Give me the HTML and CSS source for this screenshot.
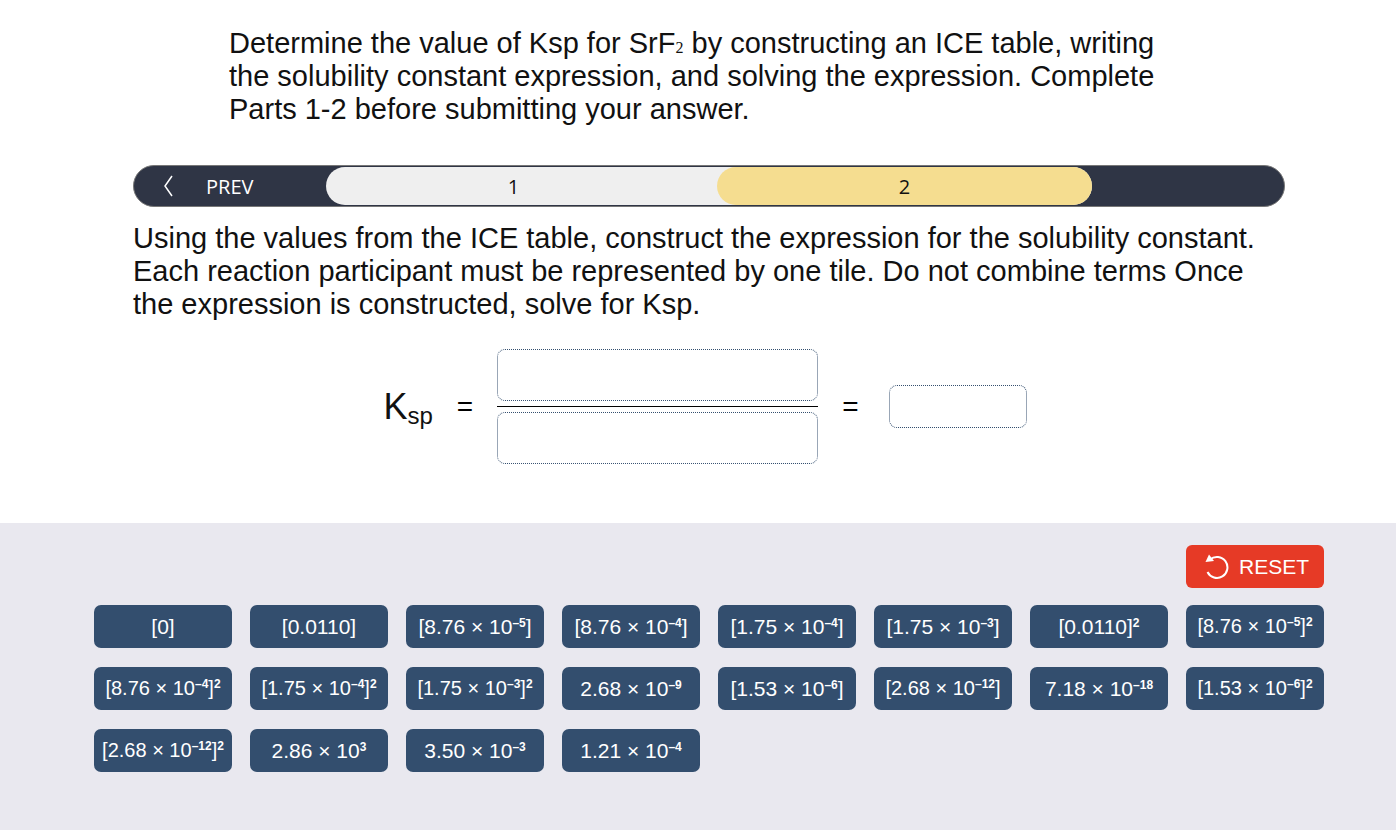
FILE: index.html
```
<!DOCTYPE html>
<html lang="en">
<head>
  <meta charset="UTF-8" />
  <meta name="viewport" content="width=device-width, initial-scale=1.0"/>
  <title>Ksp Expression</title>
  <link rel="stylesheet" href="styles.css">
</head>
<body>
  <main>
    <p class="question">Determine the value of Ksp for SrF<span class="formula-sub">2</span> by constructing an ICE table, writing the solubility constant expression, and solving the expression. Complete Parts 1-2 before submitting your answer.</p>

    <nav class="stepper">
      <button class="prev">
        <svg width="12" height="22" viewBox="0 0 12 22" fill="none" stroke="#fff" stroke-width="1.5"><path d="M10 1 L3 11 L10 21"/></svg>
        <span>PREV</span>
      </button>
      <div class="steps">
        <button class="step">1</button>
        <button class="step active">2</button>
      </div>
    </nav>

    <p class="instructions">Using the values from the ICE table, construct the expression for the solubility constant. Each reaction participant must be represented by one tile. Do not combine terms Once the expression is constructed, solve for Ksp.</p>

    <div class="equation">
      <span class="ksp">K<sub>sp</sub></span>
      <span class="equals">=</span>
      <div class="fraction">
        <input type="text" class="drop" aria-label="Numerator">
        <div class="fraction-line"></div>
        <input type="text" class="drop" aria-label="Denominator">
      </div>
      <span class="equals">=</span>
      <input type="text" class="drop answer" aria-label="Ksp value">
    </div>
  </main>

  <section class="tray">
    <button class="reset">
      <svg width="24" height="26" viewBox="0 0 24 26"><path d="M5 5.500 A10.500 10.500 0 1 1 2.500 18" fill="none" stroke="#fff" stroke-width="2"/><path d="M4 0.500 L0.500 8 L9 7 Z" fill="#fff"/></svg>
      <span>RESET</span>
    </button>
    <div class="tiles">
      <button class="tile">[0]</button>
      <button class="tile">[0.0110]</button>
      <button class="tile">[8.76 × 10<sup>–5</sup>]</button>
      <button class="tile">[8.76 × 10<sup>–4</sup>]</button>
      <button class="tile">[1.75 × 10<sup>–4</sup>]</button>
      <button class="tile">[1.75 × 10<sup>–3</sup>]</button>
      <button class="tile">[0.0110]<sup>2</sup></button>
      <button class="tile long">[8.76 × 10<sup>–5</sup>]<sup>2</sup></button>
      <button class="tile long">[8.76 × 10<sup>–4</sup>]<sup>2</sup></button>
      <button class="tile long">[1.75 × 10<sup>–4</sup>]<sup>2</sup></button>
      <button class="tile long">[1.75 × 10<sup>–3</sup>]<sup>2</sup></button>
      <button class="tile">2.68 × 10<sup>–9</sup></button>
      <button class="tile">[1.53 × 10<sup>–6</sup>]</button>
      <button class="tile long">[2.68 × 10<sup>–12</sup>]</button>
      <button class="tile">7.18 × 10<sup>–18</sup></button>
      <button class="tile long">[1.53 × 10<sup>–6</sup>]<sup>2</sup></button>
      <button class="tile long">[2.68 × 10<sup>–12</sup>]<sup>2</sup></button>
      <button class="tile">2.86 × 10<sup>3</sup></button>
      <button class="tile">3.50 × 10<sup>–3</sup></button>
      <button class="tile">1.21 × 10<sup>–4</sup></button>
    </div>
  </section>
</body>
</html>
```

FILE: styles.css
```
* {
  box-sizing: border-box;
}

body {
  margin: 0;
  min-height: 100vh;
  display: flex;
  flex-direction: column;
  font-family: "Liberation Sans", Arial, sans-serif;
  background: white;
  color: #111;
}

button {
  border: none;
  font-family: inherit;
  cursor: pointer;
}

main {
  padding: 27px 111px 59px 133px;
}

.question,
.instructions {
  margin: 0;
  font-size: 29px;
  line-height: 33px;
}

.question {
  margin: 0 96px 39px;
}

.formula-sub {
  font-family: "Liberation Serif", serif;
  font-size: 16px;
  line-height: 1;
}

/* Step bar */
.stepper {
  display: grid;
  grid-template-columns: 1fr 4fr 1fr;
  height: 42px;
  margin-bottom: 15px;
  background: #2f3545;
  border: 1px solid #777;
  border-radius: 21px;
  font-family: "Open Sans", "Noto Sans", sans-serif;
}

.prev {
  display: flex;
  align-items: center;
  gap: 32px;
  padding: 0 28px;
  background: none;
  color: white;
  font-size: 20px;
}

.steps {
  display: flex;
  justify-content: space-between;
  height: 38px;
  margin-top: 1px;
  background: #efefef;
  border-radius: 19px;
}

.step {
  width: 49%;
  background: none;
  border-radius: 19px;
  color: #111;
  font-size: 20px;
}

.step.active {
  background: #f5dd90;
}

/* Equation */
.equation {
  display: flex;
  align-items: center;
  justify-content: center;
  margin-top: 28px;
  padding-right: 8px;
}

.ksp {
  font-size: 36px;
}

.ksp sub {
  font-size: 24px;
  line-height: 1;
  vertical-align: -5px;
}

.equals {
  margin: 0 24px;
  font-size: 28px;
  color: #000;
}

.fraction {
  width: 321px;
}

.drop {
  display: block;
  width: 100%;
  height: 52px;
  padding: 0 10px;
  background: white;
  border: 1px dotted #344f6f;
  border-radius: 8px;
  text-align: center;
  font-size: 20px;
}

.drop.answer {
  width: 138px;
  height: 43px;
  margin-left: 6px;
}

.fraction-line {
  height: 1px;
  margin: 5px 0;
  background: #000;
}

/* Tile tray */
.tray {
  flex: 1;
  display: flex;
  flex-direction: column;
  padding: 22px 72px 58px 94px;
  background: #e9e8ef;
}

.reset {
  align-self: flex-end;
  display: flex;
  align-items: center;
  justify-content: center;
  gap: 10px;
  width: 138px;
  height: 43px;
  margin-bottom: 17px;
  padding: 0 0 0 4px;
  background: #e63a26;
  border-radius: 6px;
  color: white;
  font-size: 21px;
}

.tiles {
  display: grid;
  grid-template-columns: repeat(auto-fill, 138px);
  gap: 19px 18px;
}

.tile {
  height: 43px;
  padding: 0;
  background: #334e6e;
  border-radius: 7px;
  color: white;
  font-size: 21px;
  white-space: nowrap;
}

.tile sup {
  font-size: 12px;
  font-weight: bold;
  line-height: 1;
  vertical-align: 7px;
}

/* smaller text so the squared terms fit */
.tile.long {
  font-size: 20px;
}
```
